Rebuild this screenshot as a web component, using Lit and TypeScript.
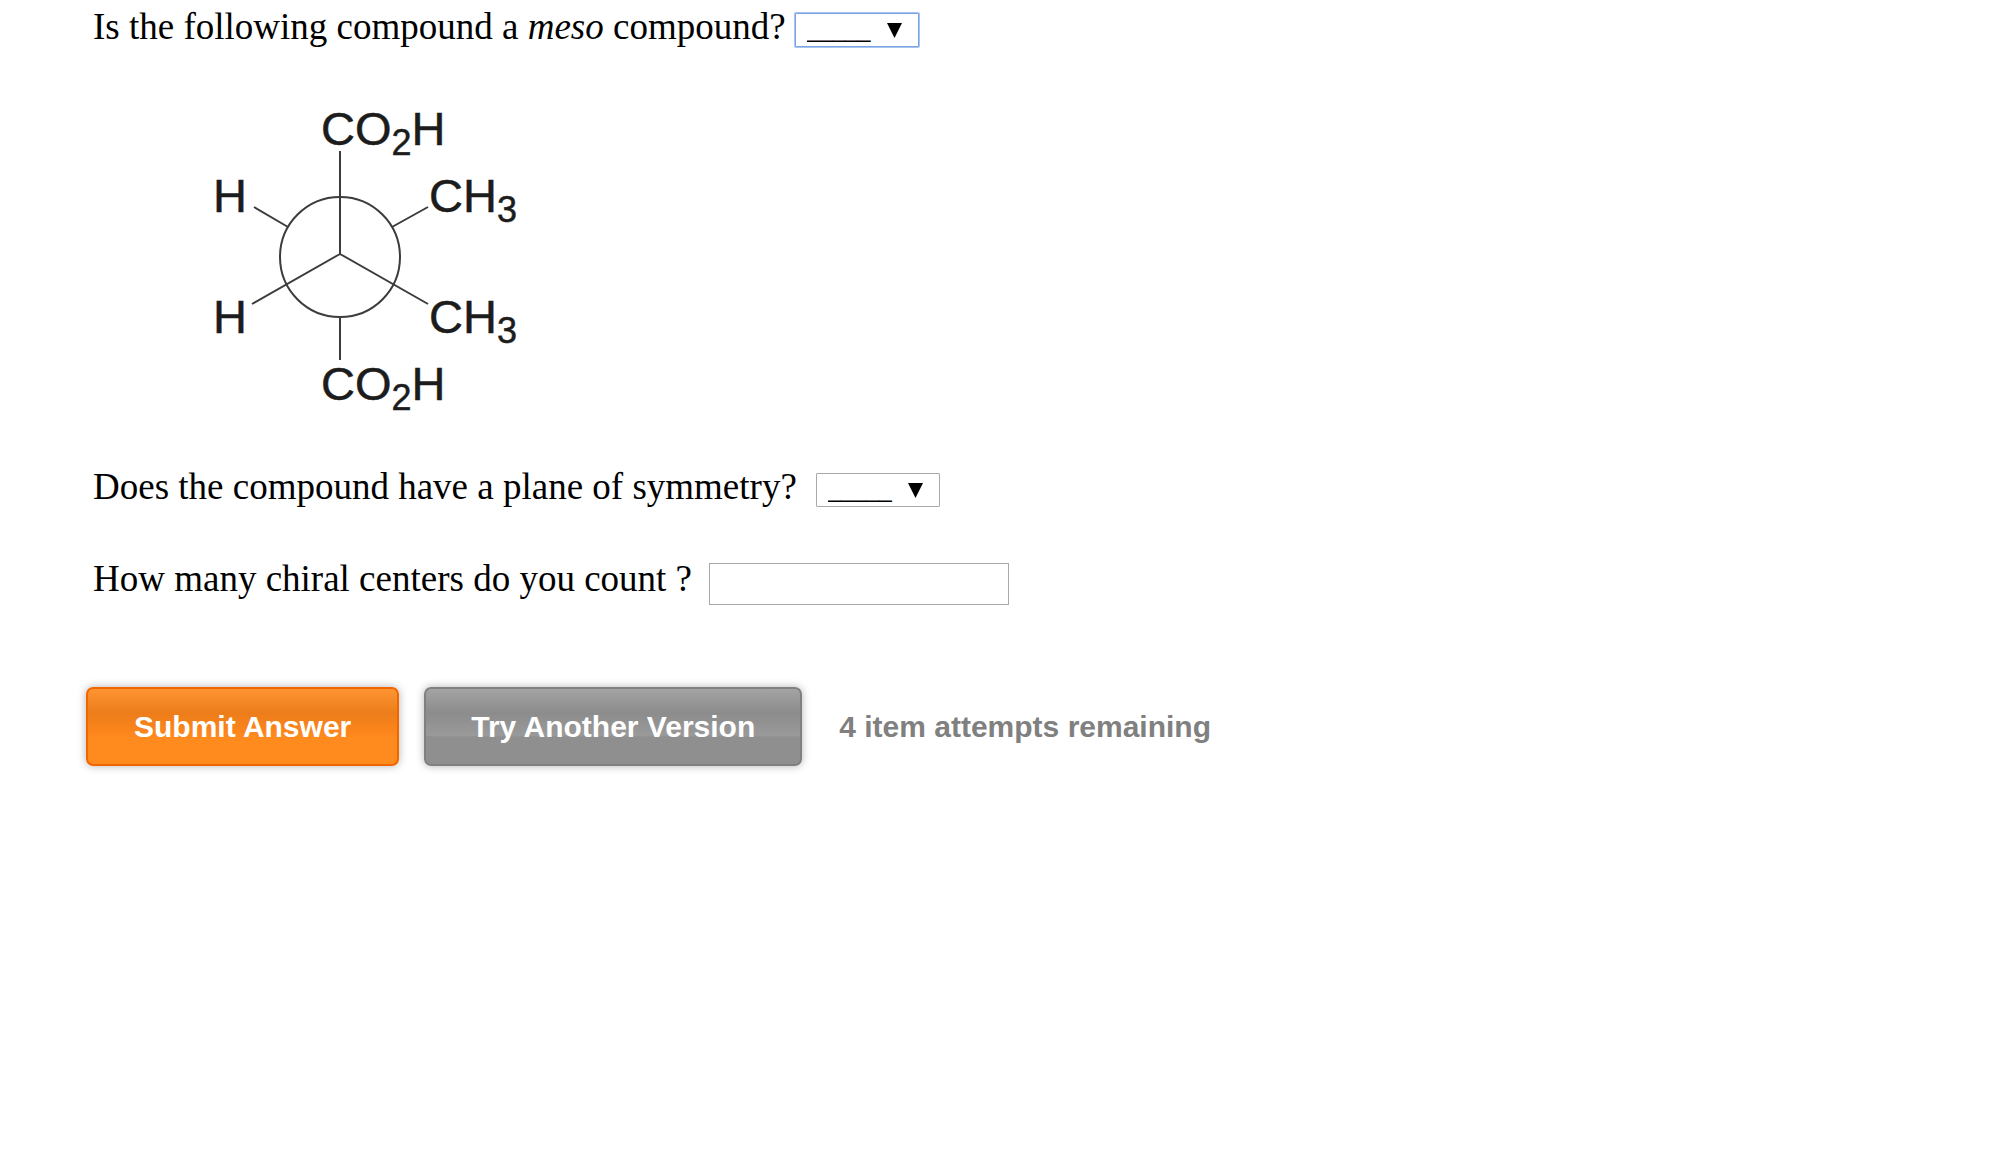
import { LitElement, html, svg, css } from "lit";
import { customElement, property } from "lit/decorators.js";

interface Label {
  x: number;
  y: number;
  text: string;
  sub?: string;
  tail?: string;
}

@customElement("newman-projection")
export class NewmanProjection extends LitElement {
  static styles = css`
    :host {
      display: block;
    }
    .drawing {
      display: block;
      width: 340px;
      height: 340px;
      font-family: "Liberation Sans", Arial, sans-serif;
    }
    .bond {
      fill: none;
      stroke: #3c3c3c;
      stroke-width: 2;
    }
    .atom {
      fill: #1c1c1c;
      stroke: #1c1c1c;
      stroke-width: 0.5;
      font-size: 47px;
    }
    .sub {
      font-size: 36px;
    }
  `;

  private labels: Label[] = [
    { x: 121, y: 55, text: "CO", sub: "2", tail: "H" },
    { x: 13, y: 122, text: "H" },
    { x: 229, y: 122, text: "CH", sub: "3" },
    { x: 13, y: 243, text: "H" },
    { x: 229, y: 243, text: "CH", sub: "3" },
    { x: 121, y: 310, text: "CO", sub: "2", tail: "H" },
  ];

  render() {
    return html`
      <svg class="drawing" viewBox="0 0 340 340" role="img" aria-label="Newman projection">
        <circle class="bond" cx="140" cy="167" r="60"></circle>
        <path
          class="bond"
          d="M140 61V164M140 228V270M140 164L52 214M140 164L228 214M54 117L88 137M228 117L192 137"
        ></path>
        ${this.labels.map(
          (l) => svg`<text class="atom" x=${l.x} y=${l.y}>${l.text}${
            l.sub ? svg`<tspan class="sub" dy="10">${l.sub}</tspan>` : ""
          }${l.tail ? svg`<tspan dy="-10">${l.tail}</tspan>` : ""}</text>`
        )}
      </svg>
    `;
  }
}

@customElement("answer-select")
export class AnswerSelect extends LitElement {
  @property() label = "";
  @property({ type: Boolean, reflect: true }) active = false;

  static styles = css`
    :host {
      display: grid;
      grid-template-columns: 124px;
      align-items: center;
    }
    .choice {
      grid-area: 1 / 1;
      appearance: none;
      box-sizing: border-box;
      width: 100%;
      height: 34px;
      margin: 0;
      padding: 0 36px 2px 11px;
      border: 1px solid #a9a9a9;
      border-radius: 1px;
      outline: none;
      background: #fff;
      color: #000;
      font: 23px "Liberation Sans", Arial, sans-serif;
    }
    :host([active]) .choice,
    .choice:focus {
      border-color: #7ba3e3;
      box-shadow: 0 0 0 1px #a9c4f0;
    }
    .arrow {
      grid-area: 1 / 1;
      justify-self: end;
      width: 15px;
      height: 15px;
      margin-right: 17px;
      pointer-events: none;
    }
  `;

  render() {
    return html`
      <select class="choice" aria-label=${this.label}>
        <option>_____</option>
        <option>yes</option>
        <option>no</option>
      </select>
      <svg class="arrow" viewBox="0 0 15 15" aria-hidden="true"><path d="M0 0H15L7.5 15Z"></path></svg>
    `;
  }
}

@customElement("app-root")
export class AppRoot extends LitElement {
  static styles = css`
    :host {
      display: block;
      background: #fff;
      color: #000;
      font-family: "Liberation Serif", "Times New Roman", serif;
    }
    .page {
      padding: 5px 24px 24px 86px;
    }
    .question {
      display: flex;
      align-items: flex-start;
      gap: 19px;
      padding-left: 7px;
      font-size: 37px;
      line-height: 44px;
    }
    .tight {
      gap: 9px;
    }
    .figure {
      margin: 41px 0 35px 114px;
    }
    .control {
      margin-top: 8px;
    }
    .count {
      gap: 17px;
      margin-top: 48px;
    }
    .entry {
      box-sizing: border-box;
      width: 300px;
      height: 42px;
      margin: 6px 0 0;
      padding: 2px 8px;
      border: 1px solid #a9a9a9;
      outline: none;
      font: 30px "Liberation Sans", Arial, sans-serif;
    }
    .actions {
      display: flex;
      align-items: center;
      margin-top: 82px;
      gap: 25px;
      font: bold 30px "Liberation Sans", Arial, sans-serif;
    }
    .button {
      height: 79px;
      padding: 0 45px;
      border: 2px solid #808080;
      border-radius: 7px;
      background: linear-gradient(#a3a3a3, #8c8c8c 32%, #999 60%, #9c9c9c 61%, #8f8f8f 64%, #8f8f8f);
      box-shadow: 0 0 8px rgba(0, 0, 0, 0.3);
      color: #fff;
      font: inherit;
    }
    .primary {
      padding: 0 46px;
      border-color: #f26500;
      background: linear-gradient(#ff9433, #ec7d1a 32%, #fd861c 58%, #ff8a1e 64%, #ff8a1e);
    }
    .attempts {
      margin-left: 12px;
      color: #808080;
    }
  `;

  render() {
    return html`
      <main class="page">
        <div class="question tight">
          <span>Is the following compound a <em>meso</em> compound?</span>
          <answer-select class="control" active label="Is the following compound a meso compound?"></answer-select>
        </div>
        <newman-projection class="figure"></newman-projection>
        <div class="question">
          <span>Does the compound have a plane of symmetry?</span>
          <answer-select class="control" label="Does the compound have a plane of symmetry?"></answer-select>
        </div>
        <div class="question count">
          <label for="centers">How many chiral centers do you count ?</label>
          <input class="entry" id="centers" type="text" />
        </div>
        <div class="actions">
          <button class="button primary" type="button">Submit Answer</button>
          <button class="button" type="button">Try Another Version</button>
          <span class="attempts">4 item attempts remaining</span>
        </div>
      </main>
    `;
  }
}
